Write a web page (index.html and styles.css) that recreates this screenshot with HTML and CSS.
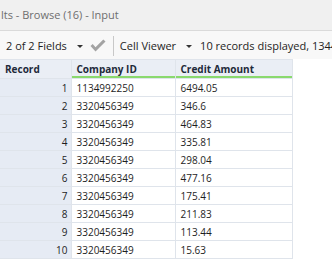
FILE: index.html
```html
<!DOCTYPE html>
<html lang="en">
  <head>
    <meta charset="UTF-8" />
    <meta name="viewport" content="width=device-width, initial-scale=1.0" />
    <title>Browse (16) - Input</title>
    <link rel="stylesheet" href="styles.css">
  </head>
  <body>
    <div class="judul">lts - Browse (16) - Input</div>
    <div class="toolbar">
      <span class="label">2 of 2 Fields</span>
      <span class="panah"></span>
      <svg class="centang" width="16" height="13" viewBox="0 0 16 13">
        <path d="M0.5 7 L5.5 12.5 L15.5 2.5 L13.3 0.5 L5.5 8.2 L2.7 5 Z" fill="#a3a3a3" />
      </svg>
      <span class="garis"></span>
      <span class="label">Cell Viewer</span>
      <span class="panah"></span>
      <span class="label info">10 records displayed, 1344</span>
    </div>
    <table>
      <tr>
        <th class="rec">Record</th>
        <th class="kol">Company ID</th>
        <th class="kol lebar">Credit Amount</th>
      </tr>
      <tr><td class="rec">1</td><td>1134992250</td><td>6494.05</td></tr>
      <tr><td class="rec">2</td><td>3320456349</td><td>346.6</td></tr>
      <tr><td class="rec">3</td><td>3320456349</td><td>464.83</td></tr>
      <tr><td class="rec">4</td><td>3320456349</td><td>335.81</td></tr>
      <tr><td class="rec">5</td><td>3320456349</td><td>298.04</td></tr>
      <tr><td class="rec">6</td><td>3320456349</td><td>477.16</td></tr>
      <tr><td class="rec">7</td><td>3320456349</td><td>175.41</td></tr>
      <tr><td class="rec">8</td><td>3320456349</td><td>211.83</td></tr>
      <tr><td class="rec">9</td><td>3320456349</td><td>113.44</td></tr>
      <tr><td class="rec">10</td><td>3320456349</td><td>15.63</td></tr>
    </table>
  </body>
</html>
```
FILE: styles.css
```css
* { box-sizing: border-box }
body {
  margin: 0;
  background: white;
  font-family: "Open Sans", sans-serif;
  color: #1e1e1e;
  overflow: hidden;
}
.judul {
  height: 31px;
  padding: 7px 0 0 1px;
  background: #f0f0f0;
  border-bottom: 1px solid #dadada;
  color: #6e6e6e;
  font-size: 11px;
  white-space: nowrap;
}
.toolbar {
  display: flex;
  align-items: center;
  height: 28px;
  padding: 1px 0 0 6px;
  background: #f8f8f8;
  font-size: 11px;
  white-space: nowrap;
  overflow: hidden;
}
.toolbar > * { flex-shrink: 0 }
.panah {
  width: 0;
  height: 0;
  margin: 1px 7px 0 10px;
  border-left: 3px solid transparent;
  border-right: 3px solid transparent;
  border-top: 3px solid #333;
}
.centang { margin-right: 7px }
.garis {
  width: 1px;
  height: 20px;
  margin-right: 6px;
  background: #c8c8c8;
}
.info { margin-left: 1px }
table {
  border-collapse: collapse;
  font-size: 10px;
}
th, td {
  height: 18px;
  padding: 0 5px;
  border: 1px solid #dfe4eb;
  text-align: left;
  white-space: nowrap;
}
th {
  height: 19px;
  background: #eaeef5;
  font-weight: bold;
  color: #1e2a3a;
}
th.kol { box-shadow: inset 0 -2px 0 #8ad96e }
td { background: white }
.rec {
  width: 71px;
  border-left: none;
}
td.rec {
  background: #e6ebf4;
  text-align: right;
  padding-right: 3px;
}
th.kol { width: 104px }
th.lebar { width: 117px }
```
